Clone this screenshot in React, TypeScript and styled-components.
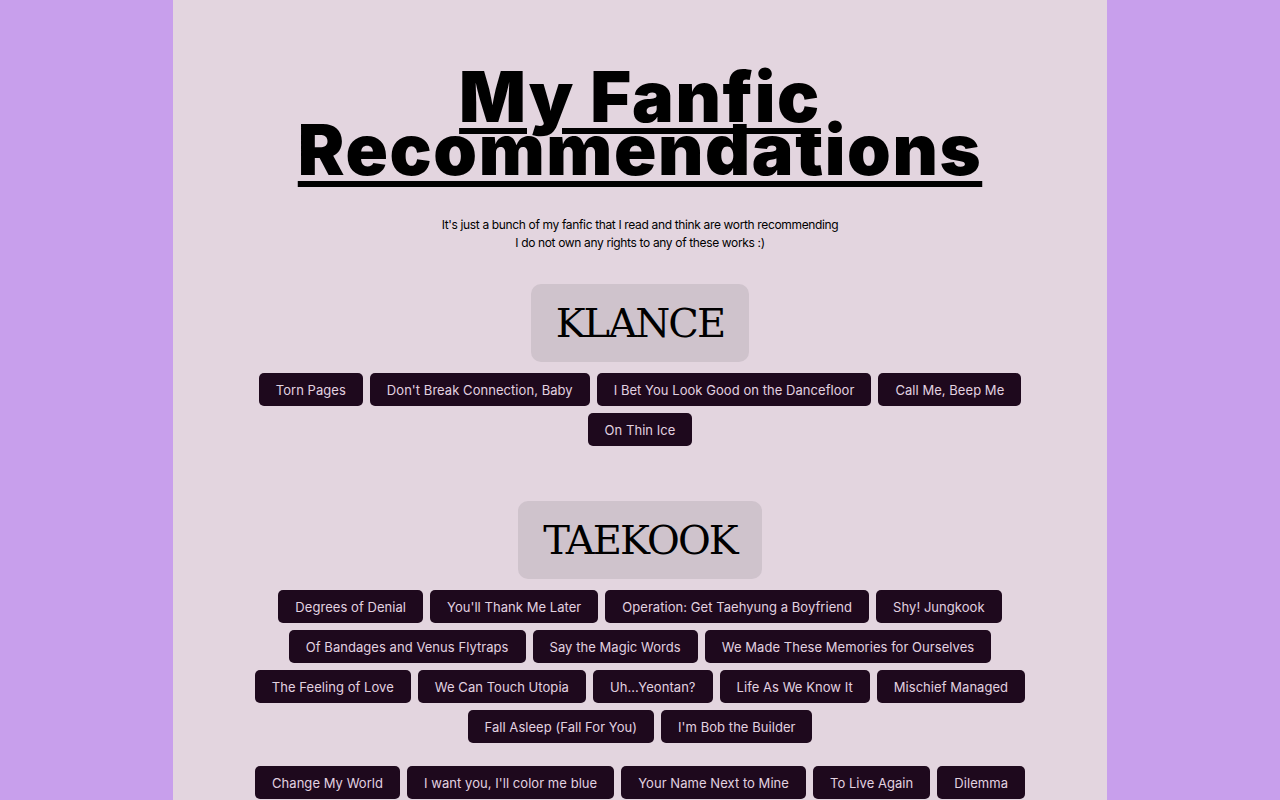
import React from "react";
import styled, { createGlobalStyle } from "styled-components";

const GlobalStyle = createGlobalStyle`
  html, body {
    margin: 0;
    padding: 0;
    background: #c89fec;
  }
  * { box-sizing: border-box; }
`;

const Page = styled.main`
  width: 934px;
  min-height: 100vh;
  margin: 0 auto;
  background: #e3d5df;
  padding: 70px 80px 40px;
  display: flex;
  flex-direction: column;
  align-items: center;
`;

const Title = styled.h1`
  margin: 0;
  font-family: Inter, "Liberation Sans", sans-serif;
  font-weight: 900;
  font-size: 70px;
  line-height: 53px;
  letter-spacing: 1.6px;
  text-align: center;
  color: #000;
  text-decoration: underline;
  text-decoration-thickness: 6px;
  text-underline-offset: 6px;
`;

const Subtitle = styled.p`
  margin: 40px 0 0;
  font-family: Inter, "Liberation Sans", sans-serif;
  font-size: 12px;
  line-height: 18px;
  letter-spacing: -0.35px;
  text-align: center;
  color: #000;
`;

const Section = styled.section<{ $gap: number }>`
  margin-top: ${(p) => p.$gap}px;
  display: flex;
  flex-direction: column;
  align-items: center;
  width: 100%;
`;

const CategoryTag = styled.h2`
  margin: 0 0 11px;
  padding: 12px 25px;
  background: #cfc3cc;
  border-radius: 10px;
  font-family: "DejaVu Serif", "Liberation Serif", serif;
  font-weight: 400;
  font-size: 40px;
  line-height: 54px;
  letter-spacing: -1.9px;
  color: #000;
`;

const ButtonList = styled.div<{ $top?: number }>`
  display: flex;
  flex-wrap: wrap;
  justify-content: center;
  gap: 7px;
  width: 100%;
  margin-top: ${(p) => p.$top ?? 0}px;
`;

const FicButton = styled.a`
  display: inline-flex;
  align-items: center;
  height: 33px;
  padding: 0 17px;
  background: #1e091d;
  color: #e2d2e0;
  border-radius: 5px;
  font-family: Inter, "Liberation Sans", sans-serif;
  font-size: 13px;
  letter-spacing: 0.05px;
  text-decoration: none;
  white-space: nowrap;
  cursor: pointer;
`;

const klance = [
  "Torn Pages",
  "Don't Break Connection, Baby",
  "I Bet You Look Good on the Dancefloor",
  "Call Me, Beep Me",
  "On Thin Ice",
];

const taekook = [
  "Degrees of Denial",
  "You'll Thank Me Later",
  "Operation: Get Taehyung a Boyfriend",
  "Shy! Jungkook",
  "Of Bandages and Venus Flytraps",
  "Say the Magic Words",
  "We Made These Memories for Ourselves",
  "The Feeling of Love",
  "We Can Touch Utopia",
  "Uh...Yeontan?",
  "Life As We Know It",
  "Mischief Managed",
  "Fall Asleep (Fall For You)",
  "I'm Bob the Builder",
];

const taekookMore = [
  "Change My World",
  "I want you, I'll color me blue",
  "Your Name Next to Mine",
  "To Live Again",
  "Dilemma",
];

export default function App() {
  return (
    <>
      <GlobalStyle />
      <Page>
        <Title>
          My Fanfic
          <br />
          Recommendations
        </Title>
        <Subtitle>
          It's just a bunch of my fanfic that I read and think are worth recommending
          <br />
          I do not own any rights to any of these works :)
        </Subtitle>

        <Section $gap={32}>
          <CategoryTag>KLANCE</CategoryTag>
          <ButtonList>
            {klance.map((t) => (
              <FicButton key={t}>{t}</FicButton>
            ))}
          </ButtonList>
        </Section>

        <Section $gap={55}>
          <CategoryTag>TAEKOOK</CategoryTag>
          <ButtonList>
            {taekook.map((t) => (
              <FicButton key={t}>{t}</FicButton>
            ))}
          </ButtonList>
          <ButtonList $top={23}>
            {taekookMore.map((t) => (
              <FicButton key={t}>{t}</FicButton>
            ))}
          </ButtonList>
        </Section>
      </Page>
    </>
  );
}
